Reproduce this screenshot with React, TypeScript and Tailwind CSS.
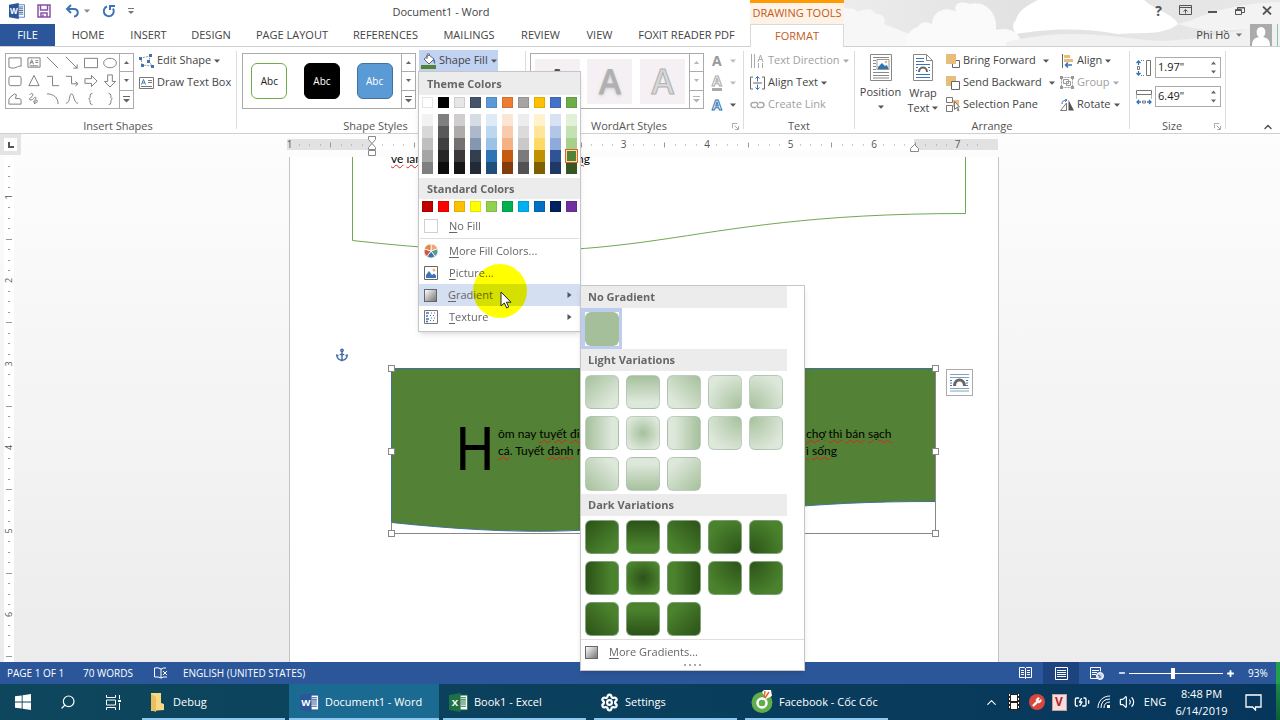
import type { ReactNode } from "react";
import {
    Anchor,
    BatteryCharging,
    ChevronUp,
    Plus,
    Minus,
    Search,
    Settings,
    Volume2,
    Wifi,
    Wrench,
} from "lucide-react";

const TABS = [
    { name: "HOME", width: "w-[60px]" },
    { name: "INSERT", width: "w-[61px]" },
    { name: "DESIGN", width: "w-[64px]" },
    { name: "PAGE LAYOUT", width: "w-[98px]" },
    { name: "REFERENCES", width: "w-[89px]" },
    { name: "MAILINGS", width: "w-[78px]" },
    { name: "REVIEW", width: "w-[65px]" },
    { name: "VIEW", width: "w-[53px]" },
    { name: "FOXIT READER PDF", width: "w-[121px]" },
];

const SHAPES = [
    { name: "Document", d: "M1 2h13v9c-4-1-6 4-13 1z" },
    { name: "Text Box", d: "M1 2h13v10H1zM3 9l2-5 2 5M4 7h2M9 5h3M9 7h3M3 10.5h9" },
    { name: "Line", d: "M1 1l12 12" },
    { name: "Arrow", d: "M1 1l12 12M13 9v4H9" },
    { name: "Rectangle", d: "M.5 2.500h14v10H.5z" },
    { name: "Oval", d: "M7.500 2.500c9 0 9 10 0 10s-9-10 0-10z" },
    { name: "Rounded Rectangle", d: "M3 2.500h9q2 0 2 2v6q0 2-2 2H3q-2 0-2-2v-6q0-2 2-2z" },
    { name: "Triangle", d: "M7.500 1.500l5.500 11H2z" },
    { name: "Elbow Connector", d: "M1 2.500h6v10h7" },
    { name: "Elbow Arrow", d: "M1 2.500h6v8h6M11 8l3 2.500-3 2.500" },
    { name: "Right Arrow", d: "M1 5h7V1.500l6 6-6 6V10H1z" },
    { name: "Down Arrow", d: "M5 1h5v7h3.500l-6 6-6-6H5z" },
    { name: "Freeform", d: "M2 6l5-4 2 1-1 4h4q2 0 2 2v4H1V8z" },
    { name: "Scribble", d: "M3 3c3-4 5 1 1 3s1 4 3 1 4-1 1 2 3 4 3 1-3-1-3 3" },
    { name: "Arc", d: "M1 2c7 0 12 4 12 11" },
    { name: "Curve", d: "M1 12c5 0 3-10 6-10s2 10 7 10" },
    { name: "Left Brace", d: "M9 1.500q-2.500 0-2.500 2.500v2l-1.500 1.500 1.500 1.500v2q0 2.500 2.500 2.500" },
    { name: "Right Brace", d: "M6 1.500q2.500 0 2.500 2.500v2l1.500 1.500-1.500 1.500v2q0 2.500-2.500 2.500" },
];

const THEME = [
    ["White", "bg-white", "bg-[#f2f2f2]", "bg-[#d8d8d8]", "bg-[#bfbfbf]", "bg-[#a5a5a5]", "bg-[#7f7f7f]"],
    ["Black", "bg-black", "bg-[#7f7f7f]", "bg-[#595959]", "bg-[#3f3f3f]", "bg-[#262626]", "bg-[#0c0c0c]"],
    ["Gray", "bg-[#e7e6e6]", "bg-[#d0cece]", "bg-[#aeabab]", "bg-[#757070]", "bg-[#3a3838]", "bg-[#171616]"],
    ["Blue-Gray", "bg-[#44546a]", "bg-[#d6dce4]", "bg-[#adb9ca]", "bg-[#8496b0]", "bg-[#323f4f]", "bg-[#222a35]"],
    ["Blue", "bg-[#5b9bd5]", "bg-[#deebf6]", "bg-[#bdd7ee]", "bg-[#9cc3e5]", "bg-[#2e75b5]", "bg-[#1e4e79]"],
    ["Orange", "bg-[#ed7d31]", "bg-[#fbe5d5]", "bg-[#f7cbac]", "bg-[#f4b183]", "bg-[#c55a11]", "bg-[#833c0b]"],
    ["Mid Gray", "bg-[#a5a5a5]", "bg-[#ededed]", "bg-[#dbdbdb]", "bg-[#c9c9c9]", "bg-[#7b7b7b]", "bg-[#525252]"],
    ["Gold", "bg-[#ffc000]", "bg-[#fff2cc]", "bg-[#fee599]", "bg-[#ffd965]", "bg-[#bf9000]", "bg-[#7f6000]"],
    ["Dark Blue", "bg-[#4472c4]", "bg-[#d9e2f3]", "bg-[#b4c6e7]", "bg-[#8eaadb]", "bg-[#2f5496]", "bg-[#1f3864]"],
    ["Green", "bg-[#70ad47]", "bg-[#e2efd9]", "bg-[#c5e0b3]", "bg-[#a8d08d]", "bg-[#538135]", "bg-[#375623]"],
];

const STANDARD = [
    "bg-[#c00000]",
    "bg-[#ff0000]",
    "bg-[#ffc000]",
    "bg-[#ffff00]",
    "bg-[#92d050]",
    "bg-[#00b050]",
    "bg-[#00b0f0]",
    "bg-[#0070c0]",
    "bg-[#002060]",
    "bg-[#7030a0]",
];

const DIRECTIONS = [
    "bg-linear-to-br",
    "bg-linear-to-b",
    "bg-linear-to-bl",
    "bg-radial-[at_100%_100%]",
    "bg-radial-[at_0%_100%]",
    "bg-linear-to-r",
    "bg-radial",
    "bg-linear-to-l",
    "bg-radial-[at_100%_0%]",
    "bg-radial-[at_0%_0%]",
    "bg-linear-to-tr",
    "bg-linear-to-t",
    "bg-linear-to-tl",
];

const INCH = 83.5;

function Caret({ className = "text-[#555]" }: { className?: string }) {
    return (
        <svg width="6" height="4" viewBox="0 0 6 4" className={`shrink-0 ${className}`}>
            <path d="M0 .5h6L3 3.800z" fill="currentColor" />
        </svg>
    );
}

function Group({ label, className, launcher, children }: { label: string; className: string; launcher?: boolean; children: ReactNode }) {
    return (
        <section className={`flex shrink-0 ${className}`}>
            <div className="flex-1 flex flex-col justify-between pt-[3px]">
                <div className="flex">{children}</div>
                <div className="flex h-[14px] items-center text-[#555]">
                    <h2 className="flex-1 text-center">{label}</h2>
                    {launcher && (
                        <button aria-label={`${label} settings`} className="mr-1">
                            <svg width="7" height="7" viewBox="0 0 8 8" fill="none" stroke="#999">
                                <path d="M.5 6V.5H6M3 3l4 4M7.500 3.500v4h-4" />
                            </svg>
                        </button>
                    )}
                </div>
            </div>
            <div className="w-px my-1 bg-[#dcdcdc]" />
        </section>
    );
}

function Command({ label, icon, caret, disabled, wide }: { label: string; icon: ReactNode; caret?: boolean; disabled?: boolean; wide?: boolean }) {
    return (
        <button disabled={disabled} className={`flex h-[21px] items-center gap-[3px] whitespace-nowrap ${disabled ? "text-[#a0a0a0]" : "text-[#444]"}`}>
            {icon}
            <span>{label}</span>
            {caret && <Caret className={`${wide ? "ml-1" : ""} ${disabled ? "text-[#aaa]" : "text-[#555]"}`} />}
        </button>
    );
}

function GalleryScroll({ muted }: { muted?: boolean }) {
    const tone = muted ? "#b5b5b5" : "#666";
    return (
        <div className="flex w-[14px] flex-col divide-y divide-[#ababab] border-l border-[#ababab]">
            <button aria-label="Previous row" className="flex flex-1 items-center justify-center">
                <svg width="5" height="3" viewBox="0 0 5 3"><path d="M0 3h5L2.500 0z" fill={tone} /></svg>
            </button>
            <button aria-label="Next row" className="flex flex-1 items-center justify-center">
                <svg width="5" height="3" viewBox="0 0 5 3"><path d="M0 0h5L2.500 3z" fill={tone} /></svg>
            </button>
            <button aria-label="More" className="flex flex-1 items-center justify-center">
                <svg width="7" height="7" viewBox="0 0 7 7"><path d="M0 0h7v1H0zM0 3h7L3.500 6.500z" fill={tone} /></svg>
            </button>
        </div>
    );
}

function OfficeIcon({ letter, color, size }: { letter: string; color: string; size: number }) {
    return (
        <svg width={size} height={size} viewBox="0 0 18 18" className="shrink-0">
            <path d="M9 2h8.500v14H9z" fill="#fff" stroke={color} strokeWidth=".8" />
            <path d="M11 4.500h5M11 6.500h5M11 8.500h5M11 10.500h5M11 12.500h5" stroke={color} />
            <path d="M0 2l11-2v18L0 16z" fill={color} />
            <text x="5.500" y="12.500" fontSize="9" fontWeight="700" textAnchor="middle" fill="#fff">{letter}</text>
        </svg>
    );
}

function TitleBar() {
    return (
        <div className="flex h-6 items-stretch">
            <div className="flex w-[750px] shrink-0 items-center">
                <div className="flex w-[150px] items-center pb-[3px] pl-[9px]">
                    <OfficeIcon letter="W" color="#2b579a" size={16} />
                    <button aria-label="Save" className="ml-3">
                        <svg width="14" height="14" viewBox="0 0 14 14" fill="none" stroke="#8a4fa3" strokeWidth="1.500">
                            <path d="M1 1h12v12H1zM3.500 1v5h7V1M4 13V9h6v4M6 10.500v2" />
                        </svg>
                    </button>
                    <button aria-label="Undo" className="ml-[14px]">
                        <svg width="15" height="14" viewBox="0 0 15 14" fill="none" stroke="#3e74b5" strokeWidth="2">
                            <path d="M6 1L2 5l4 4M2 5h7c5 0 5 7 0 7.500" />
                        </svg>
                    </button>
                    <span className="ml-1"><Caret className="text-[#888]" /></span>
                    <button aria-label="Repeat" className="ml-3">
                        <svg width="14" height="14" viewBox="0 0 14 14" fill="none" stroke="#3e74b5" strokeWidth="2">
                            <path d="M5 2.500a5 5 0 1 0 6 2M8 6V2h5" />
                        </svg>
                    </button>
                    <button aria-label="Customize toolbar" className="ml-3">
                        <svg width="6" height="6" viewBox="0 0 6 6"><path d="M0 0h6v1H0zM0 3h6L3 6z" fill="#777" /></svg>
                    </button>
                </div>
                <h1 className="flex-1 pr-[18px] text-center text-[11px] text-[#444]">Document1 - Word</h1>
            </div>
            <div className="flex w-[94px] shrink-0 items-center justify-center border-t-3 border-[#ff9a00] bg-[#fdf2e6] text-[#bf5b1c]">
                DRAWING TOOLS
            </div>
            <div className="ml-auto flex items-center pb-[3px] text-[#555]">
                <button aria-label="Help" className="w-[27px] text-[14px] font-bold">?</button>
                <button aria-label="Ribbon display options" className="flex w-[27px] justify-center">
                    <svg width="13" height="11" viewBox="0 0 13 11" fill="none" stroke="currentColor">
                        <path d="M.5 .5h12v9H.5zM.5 2.500h12M6.500 8.500v-4M4.500 6.500l2-2 2 2" />
                    </svg>
                </button>
                <button aria-label="Minimize" className="flex w-[27px] justify-center">
                    <svg width="9" height="4" viewBox="0 0 9 4"><path d="M0 2h9v2H0z" fill="currentColor" /></svg>
                </button>
                <button aria-label="Restore" className="flex w-[27px] justify-center">
                    <svg width="10" height="10" viewBox="0 0 10 10" fill="none" stroke="currentColor">
                        <path d="M.5 3.500h6v5h-6zM.5 4.500h6M2.500 3.500v-2h7v5h-3M2.500 2h7" />
                    </svg>
                </button>
                <button aria-label="Close" className="flex w-[27px] justify-center">
                    <svg width="10" height="9" viewBox="0 0 10 9" stroke="currentColor" strokeWidth="1.800"><path d="M1 .5l8 8M9 .5l-8 8" /></svg>
                </button>
            </div>
        </div>
    );
}

function TabBar() {
    return (
        <div className="flex h-[23px] items-stretch border-b border-[#d0d0d0] text-[#444]">
            <button className="mr-[3px] w-[55px] shrink-0 bg-[#2b579a] text-white">FILE</button>
            {TABS.map((tab) => (
                <button key={tab.name} className={`shrink-0 whitespace-nowrap ${tab.width}`}>{tab.name}</button>
            ))}
            <button className="-mb-px ml-[3px] w-[94px] shrink-0 border-x border-t border-[#d9d9d9] bg-white font-medium text-[#bf5b1c]">FORMAT</button>
            <div className="ml-auto flex items-center gap-2 text-[#444]">
                <button className="flex items-center gap-[6px] whitespace-nowrap">Phi Hồ <Caret className="text-[#777]" /></button>
                <svg width="22" height="22" viewBox="0 0 22 22">
                    <path d="M0 0h22v22H0z" fill="#ababab" />
                    <path d="M11 3c6 0 5 9 2 10 5 1 7 3 7 9H2c0-6 2-8 7-9C6 12 5 3 11 3z" fill="#fff" />
                </svg>
                <span className="-ml-[3px] mr-[2px] h-full w-px bg-[#7cc9b4]" />
            </div>
        </div>
    );
}

function Clouds() {
    return (
        <svg className="absolute right-0 top-0 h-[46px] w-[436px]" viewBox="0 0 436 46" preserveAspectRatio="none">
            <defs>
                <linearGradient id="sky" x1="0" x2="1">
                    <stop offset="0" stopColor="#ececec" />
                    <stop offset=".4" stopColor="#e2e2e2" />
                    <stop offset="1" stopColor="#e8e8e8" />
                </linearGradient>
            </defs>
            <path d="M0 0h436v46H0z" fill="url(#sky)" />
            <path d="M0 8c8 2 8-2 14 4 8-4 14-4 18 2 8 0 10 6 8 10 10 4 20 8 26 10 4-2 8 2 10 6l8 6H0z" fill="#f7f7f7" />
            <path d="M62 46c0-20 12-16 14-22 6-4 10 0 12 0 0-14 16-18 24-12C108 0 122 2 126 4c16-4 28 10 26 26 14-4 26 4 26 16z" fill="#fafafa" />
            <path d="M172 34c-4-6-4-10 0-14C174 10 186 4 194 0h106c10 10 30 14 34 24-14 12-38 8-60 10-40-8-80-4-102 0z" fill="#fff" />
            <path d="M334 24c20-4 40-20 102-22v30c-30-8-60 6-102-8z" fill="#f3f3f3" />
            <path d="M162 42c60-14 100-6 140-2s70-8 134-14v20H162z" fill="#f1f1f1" />
        </svg>
    );
}

function ColorRow({ colors }: { colors: string[] }) {
    return (
        <div className="flex gap-[5px] px-[3px]">
            {colors.map((color) => (
                <button key={color} aria-label="Color" className={`size-[11px] border border-black/10 ${color}`} />
            ))}
        </div>
    );
}

function MenuItem({ letter, rest, icon, active, arrow, children }: { letter: string; rest: string; icon: ReactNode; active?: boolean; arrow?: boolean; children?: ReactNode }) {
    return (
        <li className={`relative ${active ? "bg-[#d5dff2]" : ""}`}>
            <button className="flex h-[22px] w-full items-center pl-[5px] pr-2 text-[#666]">
                {icon}
                <span className="ml-[11px] flex-1 text-left"><span className="underline underline-offset-2">{letter}</span>{rest}</span>
                {arrow && <svg width="5" height="8" viewBox="0 0 5 8"><path d="M.5 1v6L4.500 4z" fill="#555" /></svg>}
            </button>
            {children}
        </li>
    );
}

function GradientIcon() {
    return <span className="size-[13px] shrink-0 border border-[#666] bg-linear-to-br from-white to-[#777]" />;
}

function Variations({ title, colors, first }: { title: string; colors: string; first?: boolean }) {
    return (
        <>
            <h3 className="h-[22px] w-[206px] bg-[#ececec] pl-[7px] font-bold leading-[22px] text-[#666]">{title}</h3>
            <div className="grid w-[206px] grid-cols-5">
                {first ? (
                    <button aria-label={title} className="flex h-[41px] items-center justify-center bg-[#bccdf0]">
                        <span className="bg-white"><span className="block size-[34px] rounded-md bg-[#a5bf9b]" /></span>
                    </button>
                ) : (
                    DIRECTIONS.map((direction) => (
                        <button key={direction} aria-label={title} className="flex h-[41px] items-center justify-center">
                            <span className={`size-[34px] rounded-md border border-[#a9c0b0]/60 to-80% ${direction} ${colors}`} />
                        </button>
                    ))
                )}
            </div>
        </>
    );
}

function GradientMenu() {
    return (
        <div className="absolute left-full top-px w-[225px] border border-[#c6c6c6] bg-white shadow-md">
            <Variations title="No Gradient" colors="" first />
            <Variations title="Light Variations" colors="from-[#a6c19c] to-[#dde7da]" />
            <Variations title="Dark Variations" colors="from-[#2c5218] to-[#4b832d]" />
            <button className="flex h-[25px] w-full items-center gap-[11px] border-t border-[#dedede] pl-1 text-[#666]">
                <GradientIcon />
                <span><span className="underline underline-offset-2">M</span>ore Gradients...</span>
            </button>
            <div className="flex h-[6px] justify-center gap-[3px]">
                {[0, 1, 2, 3].map((dot) => <span key={dot} className="size-[2px] bg-[#aaa]" />)}
            </div>
        </div>
    );
}

function FillMenu() {
    return (
        <div className="absolute -left-px top-full w-[163px] border border-[#c6c6c6] bg-white shadow-md">
            <h3 className="h-[23px] bg-[#ececec] pl-2 font-bold leading-[24px] text-[#666]">Theme Colors</h3>
            <div className="pt-[2px]"><ColorRow colors={THEME.map((column) => column[1])} /></div>
            <div className="flex gap-[5px] px-[3px] pb-1 pt-[6px]">
                {THEME.map(([name, , ...shades]) => (
                    <div key={name} className="flex w-[11px] flex-col">
                        {shades.map((shade) => (
                            <button
                                key={shade}
                                aria-label={name}
                                className={`h-3 ${shade} ${shade === "bg-[#538135]" ? "relative outline-1 outline-[#e0622a] ring-1 ring-inset ring-[#ffd9a0]" : ""}`}
                            />
                        ))}
                    </div>
                ))}
            </div>
            <h3 className="h-[21px] bg-[#ececec] pl-2 font-bold leading-[21px] text-[#666]">Standard Colors</h3>
            <div className="pt-[2px]"><ColorRow colors={STANDARD} /></div>
            <ul className="py-[3px]">
                <MenuItem letter="N" rest="o Fill" icon={<span className="size-[14px] border border-[#d0d0d0] bg-white" />} />
                <li className="mx-[1px] my-px h-px bg-[#dedede]" />
                <MenuItem
                    letter="M"
                    rest="ore Fill Colors..."
                    icon={
                        <svg width="14" height="14" viewBox="-7 -7 14 14" stroke="#fff" strokeWidth=".8">
                            <path d="M0 0V-7A7 7 0 0 1 6.660-2.160z" fill="#e9a97c" />
                            <path d="M0 0L6.660-2.160A7 7 0 0 1 4.110 5.660z" fill="#5b9a8b" />
                            <path d="M0 0L4.110 5.660A7 7 0 0 1-4.110 5.660z" fill="#3f6fb5" />
                            <path d="M0 0L-4.110 5.660A7 7 0 0 1-6.660-2.160z" fill="#d2573b" />
                            <path d="M0 0L-6.660-2.160A7 7 0 0 1 0-7z" fill="#dd8a4a" />
                        </svg>
                    }
                />
                <MenuItem
                    letter="P"
                    rest="icture..."
                    icon={
                        <svg width="14" height="14" viewBox="0 0 14 14">
                            <path d="M.5 .5h13v13H.5z" fill="#fff" stroke="#666" />
                            <path d="M2 11V9l3-4 3 4 2-1.500 2 2V12H2z" fill="#3e74b5" />
                            <circle cx="10" cy="4" r="1.500" fill="#e6b877" />
                        </svg>
                    }
                />
                <MenuItem letter="G" rest="radient" active arrow icon={<GradientIcon />}>
                    <GradientMenu />
                    <span className="pointer-events-none absolute left-[54px] -top-[20px] size-[54px] rounded-full bg-[#ffff00] mix-blend-multiply" />
                    <svg className="pointer-events-none absolute left-[81px] top-[7px]" width="12" height="18" viewBox="0 0 12 18">
                        <path d="M1 1v14l3.300-3 2.400 5 2-1-2.300-4.800H11z" fill="#fff" stroke="#222" />
                    </svg>
                </MenuItem>
                <MenuItem
                    letter="T"
                    rest="exture"
                    arrow
                    icon={
                        <svg width="14" height="14" viewBox="0 0 14 14" fill="none">
                            <path d="M.5 .5h13v13H.5z" fill="#fff" stroke="#777" />
                            <path d="M2 3h3M2 6h2M2 9h3M2 11.500h2" stroke="#3e74b5" strokeWidth="1.500" />
                            <path d="M7 3h5M6 5.500h6M7 8h5M6 10.500h6" stroke="#3e74b5" strokeDasharray="1 2" />
                        </svg>
                    }
                />
            </ul>
        </div>
    );
}

function StyleBox({ className }: { className: string }) {
    return <button className={`size-9 rounded-md border text-[10px] ${className}`}>Abc</button>;
}

function Ribbon() {
    return (
        <div className="flex h-[87px] border-b border-[#d0d0d0] bg-white">
            <Group label="Insert Shapes" className="w-[237px]">
                <div className="ml-[5px] mt-[3px] flex h-[56px] w-[129px] border border-[#ababab]">
                    <div className="grid flex-1 grid-cols-6 grid-rows-3">
                        {SHAPES.map((shape) => (
                            <button key={shape.name} aria-label={shape.name} className="flex items-center justify-center">
                                <svg width="14" height="14" viewBox="0 0 15 15" fill="none" stroke="#777"><path d={shape.d} /></svg>
                            </button>
                        ))}
                    </div>
                    <GalleryScroll />
                </div>
                <div className="ml-[5px] flex flex-col gap-px">
                    <Command
                        label="Edit Shape"
                        caret
                        icon={
                            <svg width="15" height="14" viewBox="0 0 15 14" fill="none">
                                <path d="M3 11L2 4l9-2-1 5 3 5z" stroke="#999" strokeDasharray="2 1" />
                                <path d="M0 3h3v3H0zM10 0h3v3h-3zM2 10h3v3H2zM12 11h3v3h-3zM8 6h3v3H8z" fill="#3e74b5" />
                            </svg>
                        }
                    />
                    <Command
                        label="Draw Text Box"
                        icon={
                            <svg width="15" height="12" viewBox="0 0 15 12" fill="none" stroke="#777">
                                <path d="M.5 .5h14v11H.5zM9 3.500h4M9 5.500h4M2 9.500h11" />
                                <path d="M2.500 7.500l2-5 2 5M3.500 6h2" stroke="#3e74b5" />
                            </svg>
                        }
                    />
                </div>
            </Group>
            <Group label="Shape Styles" className="w-[289px]" launcher>
                <div className="ml-[5px] mt-[3px] flex h-[56px] w-[174px] border border-[#ababab]">
                    <div className="flex flex-1 items-center justify-around">
                        <StyleBox className="border-[#70ad47] text-[#222]" />
                        <StyleBox className="border-black bg-black text-white" />
                        <StyleBox className="border-[#41719c] bg-[#5b9bd5] text-white" />
                    </div>
                    <GalleryScroll />
                </div>
                <div className="relative ml-[3px] h-[21px]">
                    <button className="flex h-[21px] w-[79px] items-center gap-[3px] whitespace-nowrap bg-[#c2d2f2] pl-[2px] text-[#444]">
                        <svg width="15" height="16" viewBox="0 0 15 16" fill="none">
                            <path d="M0 12h15v4H0z" fill="#538135" />
                            <path d="M3 6l5-4 5 4-5 5z" fill="#fff" stroke="#666" />
                            <path d="M6 6V1.500q1.500-2 3 0" stroke="#666" />
                            <path d="M12 5q3 2 2 6-2-1-2-6z" fill="#3e74b5" />
                        </svg>
                        Shape Fill
                        <Caret />
                    </button>
                    <FillMenu />
                </div>
            </Group>
            <Group label="WordArt Styles" className="w-[218px]" launcher>
                <div className="ml-1 mt-[3px] flex h-[56px] w-[174px] border border-[#ababab]">
                    <div className="flex flex-1 items-center justify-around text-[34px] font-semibold leading-none">
                        <button className="size-[45px] bg-[#f5f0f4] text-[#555]">A</button>
                        <button className="size-[45px] bg-[#f5f0f4] text-[#b0b0b0] text-shadow-md">A</button>
                        <button className="size-[45px] bg-[#f5f0f4] text-[#d8d8d8] [-webkit-text-stroke:1px_#b0b0b0]">A</button>
                    </div>
                    <GalleryScroll muted />
                </div>
                <div className="ml-2 flex flex-col gap-px text-[14px] font-bold">
                    <button aria-label="Text Fill" className="flex h-[21px] items-center gap-2 text-[#999]">A <Caret className="text-[#bbb]" /></button>
                    <button aria-label="Text Outline" className="flex h-[21px] items-center gap-2 text-white [-webkit-text-stroke:1px_#aaa]">
                        <span className="border-b-3 border-[#aaa] leading-[14px]">A</span> <Caret className="text-[#bbb]" />
                    </button>
                    <button aria-label="Text Effects" className="flex h-[21px] items-center gap-2 text-white [-webkit-text-stroke:1px_#2e75b5]">A <Caret /></button>
                </div>
            </Group>
            <Group label="Text" className="w-[111px]">
                <div className="ml-[6px] flex flex-col gap-px">
                    <Command
                        label="Text Direction"
                        caret
                        disabled
                        icon={
                            <svg width="15" height="14" viewBox="0 0 15 14" fill="none" stroke="#aaa">
                                <path d="M1.500 0v14M4.500 0v14M8.500 9v5M12.500 9v5M8 8l2.500-7L13 8M9 5.500h3" />
                            </svg>
                        }
                    />
                    <Command
                        label="Align Text"
                        caret
                        icon={
                            <svg width="15" height="14" viewBox="0 0 15 14" fill="none" stroke="#666">
                                <path d="M3 1H.5v12H3M12 1h2.500v12H12M3 7h9" />
                                <path d="M7.500 5.500v-5M5.500 2.500l2-2 2 2M7.500 8.500v5M5.500 11.500l2 2 2-2" stroke="#3e74b5" />
                            </svg>
                        }
                    />
                    <Command
                        label="Create Link"
                        disabled
                        icon={
                            <svg width="15" height="8" viewBox="0 0 15 8" fill="none" stroke="#aaa" strokeWidth="1.500">
                                <path d="M6 6.500H3.500a2.500 2.500 0 0 1 0-5H6q2 0 2 2.500M9 1.500h2.500a2.500 2.500 0 0 1 0 5H9Q7 6.500 7 4" />
                            </svg>
                        }
                    />
                </div>
            </Group>
            <Group label="Arrange" className="w-[275px]">
                <button className="ml-[5px] mt-1 flex w-[41px] flex-col items-center text-[#444]">
                    <svg width="22" height="27" viewBox="0 0 22 27" fill="none">
                        <path d="M.5 .5h21v26H.5z" fill="#fff" stroke="#888" />
                        <path d="M3 3.500h16M3 6.500h3M3 9.500h3M3 12.500h3M3 15.500h3M3 18.500h16M3 21.500h16M3 24h16" stroke="#888" />
                        <path d="M7 5.500h12v10H7z" fill="#fff" stroke="#999" />
                        <path d="M8 15v-2l4-4 3 3 2-1 1.500 4z" fill="#2e75b5" />
                        <circle cx="16" cy="8" r="1.300" fill="#e6b877" />
                    </svg>
                    <span className="mb-1 mt-[3px]">Position</span>
                    <Caret />
                </button>
                <button className="ml-1 mt-1 flex w-[36px] flex-col items-center leading-[15px] text-[#444]">
                    <svg width="20" height="27" viewBox="0 0 20 27" fill="none">
                        <path d="M.5 .5h13l6 6v20H.5zM13.500 .5v6h6" fill="#fff" stroke="#888" />
                        <path d="M3 4.500h8M3 7.500h8M3 10.500h14M3 20.500h14M3 23.500h14M3 13.500h2M3 16.500h1M15 13.500h2M16 16.500h1" stroke="#3e74b5" />
                        <path d="M6 18c0-6 8-6 8 0" stroke="#666" strokeWidth="2" />
                    </svg>
                    <span className="mt-1">Wrap</span>
                    <span className="flex items-center gap-[3px]">Text <Caret /></span>
                </button>
                <div className="ml-[5px] flex w-[110px] flex-col gap-px">
                    <Command label="Bring Forward" caret wide icon={<svg width="14" height="14" viewBox="0 0 14 14"><path d="M6.500 6.500h7v7h-7z" fill="#fff" stroke="#666" /><path d="M0 0h10v10H0z" fill="#e8bd7a" /></svg>} />
                    <Command label="Send Backward" caret wide icon={<svg width="14" height="14" viewBox="0 0 14 14"><path d="M0 0h10v10H0z" fill="#e8bd7a" /><path d="M5.500 5.500h8v8h-8z" fill="#fff" stroke="#666" /></svg>} />
                    <Command
                        label="Selection Pane"
                        icon={
                            <svg width="14" height="15" viewBox="0 0 14 15" fill="none" stroke="#777">
                                <path d="M7 3h6v7H7z" fill="#e8bd7a" stroke="none" />
                                <path d="M.5 .5h6v5h-6zM.5 8.500h6v6h-6z" />
                                <path d="M8.500 4.500v8l2-2 1.500 3.500 1-.5-1.500-3.500h2z" fill="#fff" />
                            </svg>
                        }
                    />
                </div>
                <div className="ml-1 flex flex-col gap-px">
                    <Command label="Align" caret icon={<svg width="14" height="14" viewBox="0 0 14 14" fill="none"><path d="M2.500 0v14" stroke="#666" /><path d="M4 1h6v3H4zM4 5h9v3H4z" fill="#e8bd7a" /><path d="M5 11h7M8 8.500L5.500 11 8 13.500" stroke="#3e74b5" strokeWidth="1.500" /></svg>} />
                    <Command label="Group" caret disabled icon={<svg width="14" height="13" viewBox="0 0 14 13" fill="none" stroke="#999"><path d="M1.500 1.500h11v10h-11z" strokeDasharray="2 1" /><path d="M3.500 3.500h5v4h-5zM6.500 5.500h4v4h-4z" /><path d="M0 0h3v3H0zM11 0h3v3h-3zM0 10h3v3H0zM11 10h3v3h-3z" fill="#999" stroke="none" /></svg>} />
                    <Command label="Rotate" caret icon={<svg width="14" height="12" viewBox="0 0 14 12" fill="none"><path d="M8.500 1v10.500H14z" fill="#555" /><path d="M6.500 4v7.500h-6z" stroke="#777" /><path d="M2 5q0-4 5-4M5 0l2 1-2 2" stroke="#3e74b5" /></svg>} />
                </div>
            </Group>
            <Group label="Size" className="w-[96px]" launcher>
                <div className="ml-[6px] flex flex-col gap-2 pt-[7px]">
                    <label className="flex items-center gap-[3px]">
                        <svg width="16" height="16" viewBox="0 0 16 16" fill="none">
                            <path d="M10.500 .5h4v15h-4z" stroke="#777" />
                            <path d="M5 .5h4M5 15.500h4" stroke="#777" strokeDasharray="1 1" />
                            <path d="M2.500 1v4M.5 3l2-2 2 2M2.500 15v-4M.5 13l2 2 2-2" stroke="#2e75b5" strokeWidth="1.300" />
                            <path d="M1.500 6.500h2v3h-2z" stroke="#777" />
                        </svg>
                        <span className="flex h-[21px] w-[66px] items-center border border-[#ababab]">
                            <input aria-label="Shape height" defaultValue={'1.97"'} className="w-0 flex-1 pl-[2px] text-[#222] outline-none" />
                            <svg width="5" height="13" viewBox="0 0 5 13" className="mr-1" fill="#666"><path d="M0 3.500h5L2.500 .5zM0 9.500h5l-2.500 3z" /></svg>
                        </span>
                    </label>
                    <label className="flex items-center gap-[3px]">
                        <svg width="16" height="16" viewBox="0 0 16 16" fill="none">
                            <path d="M.5 1.500h15v4H.5z" stroke="#777" />
                            <path d="M.5 6.500v4M15.500 6.500v4" stroke="#777" strokeDasharray="1 1" />
                            <path d="M1 13h4M3 11l-2 2 2 2M15 13h-4M13 11l2 2-2 2" stroke="#2e75b5" strokeWidth="1.300" />
                            <path d="M6.500 12h3v2h-3z" stroke="#777" />
                        </svg>
                        <span className="flex h-[21px] w-[66px] items-center border border-[#ababab]">
                            <input aria-label="Shape width" defaultValue={'6.49"'} className="w-0 flex-1 pl-[2px] text-[#222] outline-none" />
                            <svg width="5" height="13" viewBox="0 0 5 13" className="mr-1" fill="#666"><path d="M0 3.500h5L2.500 .5zM0 9.500h5l-2.500 3z" /></svg>
                        </span>
                    </label>
                </div>
            </Group>
            <button aria-label="Collapse ribbon" className="ml-auto mr-[6px] self-end text-[#555]">
                <ChevronUp size={12} strokeWidth={3} />
            </button>
        </div>
    );
}

// 0" sits at x = 85, the right margin at 6.5"
function Ruler() {
    const ticks = Array.from({ length: 66 }, (_, i) => i - 7).filter((i) => i % 8 !== 0);
    return (
        <svg width="711" height="22" viewBox="0 0 711 22" className="shrink-0" fontSize="10" fill="#555">
            <path d="M0 5h711v11H0z" fill="#e2e2e2" />
            <path d="M85 5h542v11H85z" fill="#fff" />
            {ticks.map((i) => (
                <path
                    key={i}
                    d={i % 4 === 0 ? `M${Math.round(85 + (i * INCH) / 8)} 8.500v5` : `M${Math.round(85 + (i * INCH) / 8)} 10.500v1`}
                    transform="translate(.5 0)"
                    stroke="#999"
                />
            ))}
            {[-1, 1, 2, 3, 4, 5, 6, 7].map((n) => (
                <text key={n} x={86 + n * INCH} y="14" textAnchor="middle">{Math.abs(n)}</text>
            ))}
            <g fill="#fff" stroke="#888">
                <path d="M81.500 2.500h7v3l-3.500 4-3.500-4zM81.500 15.500v-2l3.500-4 3.500 4v2zM81.500 16.500h7v5h-7z" />
                <path d="M623.500 17.500v-3l4-4 4 4v3z" />
            </g>
        </svg>
    );
}

function SideRuler() {
    const ticks = Array.from({ length: 60 }, (_, i) => i - 3);
    return (
        <svg width="14" height="600" viewBox="-2 0 14 600" className="absolute left-[2px] top-0" fontSize="9" fill="#555">
            <path d="M0 0h10v600H0z" fill="#fff" />
            {ticks.filter((i) => i % 8 !== 0).map((i) => (
                <path key={i} d={`M${i % 4 === 0 ? 2 : 4} ${Math.round(40 + (i * INCH) / 8)}h${i % 4 === 0 ? 6 : 2}`} transform="translate(0 .5)" stroke="#999" />
            ))}
            {[0, 1, 2, 3, 4, 5].map((n) => (
                <text key={n} transform={`translate(8 ${40 + n * INCH}) rotate(-90)`} textAnchor="middle">{n + 1}</text>
            ))}
        </svg>
    );
}

function Typo({ children }: { children: ReactNode }) {
    return <span className="underline decoration-[#e02020] decoration-wavy decoration-1 underline-offset-1">{children}</span>;
}

function Page() {
    return (
        <article className="relative w-[710px] shrink-0 border-x border-[#c4c4c4] bg-white font-[Lato,'Open_Sans',sans-serif] text-[12px] text-black">
            <svg className="absolute left-0 top-0" width="708" height="505" viewBox="290 157 708 505" fill="none">
                <path d="M352.500 150v90.500C658.500 275 658.500 213.500 965.500 213.500V150" stroke="#70a850" />
                <path d="M391.500 368.500h544v133C663.500 501 663.500 551 391.500 522.500z" fill="#538135" stroke="#41719c" />
                <path d="M391.500 368.500h544v165h-544z" stroke="#888" />
                <path d="M391.500 522v-153.500h544" stroke="#41719c" />
                <g fill="#fff" stroke="#888">
                    {[[391, 368], [663, 368], [935, 368], [391, 451], [935, 451], [391, 533], [663, 533], [935, 533]].map(([x, y]) => (
                        <rect key={`${x}-${y}`} x={x - 2.5} y={y - 2.5} width="6" height="6" />
                    ))}
                </g>
            </svg>
            <p className="absolute left-[101px] -top-[6px] leading-4"><Typo>về</Typo> <Typo>làm</Typo></p>
            <p className="absolute right-[408px] -top-[6px] leading-4"><Typo>ng</Typo></p>
            <Anchor size={14} strokeWidth={2.500} className="absolute left-[45px] top-[191px] text-[#3e6da5]" />
            <p className="absolute left-[165px] top-[257px] font-['DejaVu_Sans_Condensed',Lato,sans-serif] text-[59px] leading-[72px]">H</p>
            <p className="absolute left-[208px] top-[268px] whitespace-nowrap leading-[17px]">
                ôm nay <Typo>tuyết</Typo> <Typo>đi</Typo>
                <br />
                <Typo>cá</Typo>. Tuyết <Typo>đành</Typo> r
            </p>
            <p className="absolute left-[516px] top-[268px] whitespace-nowrap leading-[17px]">
                <Typo>chợ</Typo> <Typo>thì</Typo> <Typo>bán</Typo> <Typo>sạch</Typo>
                <br />
                <Typo>ì</Typo> <Typo>sống</Typo>
            </p>
            <button aria-label="Layout options" className="absolute left-[656px] top-[212px] border border-[#ababab] bg-white p-[3px]">
                <svg width="19" height="19" viewBox="0 0 19 19" fill="none">
                    <path d="M0 1.500h19M0 4.500h19M0 15.500h19M0 18h19" stroke="#7fa3b5" />
                    <path d="M0 7.500h3M0 10h3M0 12.500h3M16 7.500h3M16 10h3M16 12.500h3" stroke="#3e74b5" strokeDasharray="2 1" />
                    <path d="M4.500 13c0-8 10-8 10 0" stroke="#666" strokeWidth="3" />
                </svg>
            </button>
        </article>
    );
}

function StatusBar() {
    return (
        <footer className="flex h-[22px] shrink-0 items-center bg-[#2b579a] pl-[7px] text-[10px] text-white">
            <span className="w-[76px]">PAGE 1 OF 1</span>
            <span className="w-[71px]">70 WORDS</span>
            <button aria-label="Proofing" className="w-[29px]">
                <svg width="14" height="12" viewBox="0 0 14 12" fill="none" stroke="#fff">
                    <path d="M7 2v9M7 2Q4 0 .5 1v9q4-.5 6.500 1 2-1.500 6-1M7 2q2-1.500 5-1M9 4l4 4M13 4l-4 4" />
                </svg>
            </button>
            <span>ENGLISH (UNITED STATES)</span>
            <div className="ml-auto flex h-full items-center">
                <button aria-label="Read mode" className="flex h-full w-9 items-center justify-center">
                    <svg width="13" height="12" viewBox="0 0 13 12" fill="none" stroke="#fff"><path d="M6.500 1v11M.5 .5h5l1 1 1-1h5v10h-5l-1 1-1-1h-5zM2 3.500h3M2 5.500h3M2 7.500h3M8 3.500h3M8 5.500h3M8 7.500h3" /></svg>
                </button>
                <button aria-label="Print layout" className="flex h-full w-9 items-center justify-center bg-[#1e4480]">
                    <svg width="13" height="13" viewBox="0 0 13 13" fill="none" stroke="#fff"><path d="M.5 .5h12v12H.5zM2 3.500h9M2 5.500h9M2 7.500h9M2 9.500h9" /></svg>
                </button>
                <button aria-label="Web layout" className="flex h-full w-9 items-center justify-center">
                    <svg width="14" height="13" viewBox="0 0 14 13" fill="none" stroke="#fff"><path d="M7 11.500H.5V.5h10v4M2 3.500h7M2 5.500h5M2 7.500h4" /><circle cx="10" cy="9" r="3.500" fill="#c9d6ea" /><path d="M8 8l2 1v2" stroke="#2b579a" /></svg>
                </button>
                <button aria-label="Zoom out" className="ml-[3px]"><Minus size={8} strokeWidth={5} /></button>
                <input
                    type="range"
                    aria-label="Zoom"
                    defaultValue={47}
                    className="mx-[3px] h-3 w-[94px] appearance-none bg-[linear-gradient(white,white)] bg-[length:100%_1px] bg-center bg-no-repeat [&::-webkit-slider-thumb]:h-[11px] [&::-webkit-slider-thumb]:w-1 [&::-webkit-slider-thumb]:appearance-none [&::-webkit-slider-thumb]:bg-white"
                />
                <button aria-label="Zoom in"><Plus size={9} strokeWidth={5} /></button>
                <span className="w-[41px] pl-[13px]">93%</span>
                <span className="h-full w-1 bg-[#23a04c]" />
            </div>
        </footer>
    );
}

function Task({ label, icon, active }: { label: string; icon: ReactNode; active?: boolean }) {
    return (
        <button className={`flex items-center gap-[6px] border-b-2 border-[#8cc8f0] pt-[2px] ${active ? "w-[150px] bg-[#1b6a91] pl-[11px]" : "w-[143px] pl-[6px]"}`}>
            {icon}
            <span className="whitespace-nowrap">{label}</span>
        </button>
    );
}

function Taskbar() {
    return (
        <nav className="flex h-9 shrink-0 items-stretch bg-linear-to-r from-[#0e475d] to-[#07365c] text-[11px] text-white">
            <button aria-label="Start" className="flex w-[45px] items-center justify-center">
                <svg width="16" height="16" viewBox="0 0 16 16" fill="#fff"><path d="M0 2.300L6.700 1.400v6.100H0zM7.600 1.200L16 0v7.500H7.600zM0 8.400h6.700v6.200L0 13.700zM7.600 8.400H16V16l-8.400-1.200z" /></svg>
            </button>
            <button aria-label="Search" className="flex w-[45px] items-center justify-center"><Search size={16} strokeWidth={1.800} className="-scale-x-100" /></button>
            <button aria-label="Task view" className="flex w-[45px] items-center justify-center">
                <svg width="16" height="15" viewBox="0 0 16 15" fill="none" stroke="#fff"><path d="M1.500 0v2.500h9V0M1.500 5h9v5h-9zM1.500 15v-2.500h9V15M14.500 0v4M14.500 8v7" /><path d="M13 5h3v2h-3z" fill="#fff" stroke="none" /></svg>
            </button>
            <div className="ml-[7px] flex gap-1">
                <Task
                    label="Debug"
                    icon={<svg width="19" height="20" viewBox="-1 0 17 20"><path d="M1 1h7l1 15 5 0v2H1z" fill="#e5b94f" /><path d="M3 1h8v10l3 1v6L1 19V1z" fill="#f7d984" /><path d="M1 2l5 3v15l-5-2z" fill="#e9c060" /></svg>}
                />
                <Task label="Document1 - Word" active icon={<OfficeIcon letter="W" color="#2b579a" size={19} />} />
                <Task label="Book1 - Excel" icon={<OfficeIcon letter="X" color="#1e7145" size={19} />} />
            </div>
            <div className="ml-2 flex gap-2">
                <Task label="Settings" icon={<Settings size={19} strokeWidth={2.800} />} />
                <Task
                    label="Facebook - Cốc Cốc"
                    icon={
                        <svg width="22" height="24" viewBox="0 0 22 24" fill="none">
                            <circle cx="11" cy="12.500" r="10.500" fill="#5fae4b" />
                            <path d="M11 2l2-2h7l1 6-6 3z" fill="#fff" />
                            <path d="M14 1l-1 7M18 2l-4 6" stroke="#e5642d" strokeWidth="1.500" />
                            <circle cx="11" cy="13" r="4.500" stroke="#fff" strokeWidth="2.500" />
                        </svg>
                    }
                />
            </div>
            <div className="ml-auto flex items-center">
                <button aria-label="Show hidden icons" className="flex w-[23px] justify-center"><ChevronUp size={15} strokeWidth={1.800} /></button>
                <span className="flex w-[22px] justify-center">
                    <svg width="12" height="16" viewBox="0 0 12 16"><path d="M0 0h12v16H0z" fill="#222" /><path d="M3 1h6v6H3zM3 9h6v6H3z" fill="#fff" /><path d="M1.500 0v16M10.500 0v16" stroke="#fff" strokeDasharray="2 2" /></svg>
                </span>
                <span className="flex w-[23px] justify-center"><span className="flex size-4 items-center justify-center rounded-full bg-[#d9463b]"><Wrench size={10} fill="white" /></span></span>
                <span className="flex w-[22px] justify-center"><span className="flex h-[17px] w-[15px] items-center justify-center border border-[#c9a0a0] bg-[#f6dede] text-[12px] font-bold text-[#b5222a]">V</span></span>
                <span className="flex w-[23px] justify-center"><BatteryCharging size={16} strokeWidth={2} /></span>
                <span className="flex w-[22px] justify-center">
                    <svg width="14" height="14" viewBox="0 0 14 14" fill="none" stroke="#fff">
                        <path d="M1 13C1 6 6 1 13 1M4 13q0-9 9-9M7 13q0-6 6-6" />
                        <path d="M10 13l0-3 3 0v3z" fill="#fff" stroke="none" />
                    </svg>
                </span>
                <span className="flex w-[23px] justify-center"><Volume2 size={16} strokeWidth={1.800} /></span>
                <button className="w-[34px] text-center">ENG</button>
                <div className="w-[59px] text-center leading-[17px]">
                    <p>8:48 PM</p>
                    <p>6/14/2019</p>
                </div>
                <button aria-label="Notifications" className="flex w-[45px] justify-center">
                    <svg width="17" height="17" viewBox="0 0 17 17" fill="none" stroke="#fff" strokeWidth="1.300"><path d="M1 1h15v12h-5.500v3l-3-3H1z" /></svg>
                </button>
                <span className="h-full w-1 bg-linear-to-b from-[#1b8a48] to-[#0b5f35]" />
            </div>
        </nav>
    );
}

export default function App() {
    return (
        <div className="flex h-screen flex-col overflow-hidden bg-white font-['Open_Sans','Noto_Sans',sans-serif] text-[11px]">
            <header className="relative z-20 shrink-0 bg-white">
                <Clouds />
                <div className="relative">
                    <TitleBar />
                    <TabBar />
                    <Ribbon />
                </div>
            </header>
            <main className="flex min-h-0 flex-1 flex-col bg-linear-to-b from-[#fdfdfd] to-[#ececec]">
                <div className="flex h-[23px] shrink-0">
                    <div className="flex h-[21px] w-[21px] shrink-0 items-center justify-center bg-[#e4e4e4]">
                        <span className="flex size-[13px] items-center justify-center bg-white">
                            <svg width="6" height="6" viewBox="0 0 6 6"><path d="M1 0v5h5" fill="none" stroke="#555" strokeWidth="2" /></svg>
                        </span>
                    </div>
                    <div className="flex flex-1 justify-center pr-[16px]"><Ruler /></div>
                </div>
                <div className="flex min-h-0 flex-1 overflow-hidden">
                    <div className="relative w-[18px] shrink-0 overflow-hidden"><SideRuler /></div>
                    <div className="flex flex-1 justify-center pr-[10px]"><Page /></div>
                </div>
            </main>
            <StatusBar />
            <Taskbar />
        </div>
    );
}
